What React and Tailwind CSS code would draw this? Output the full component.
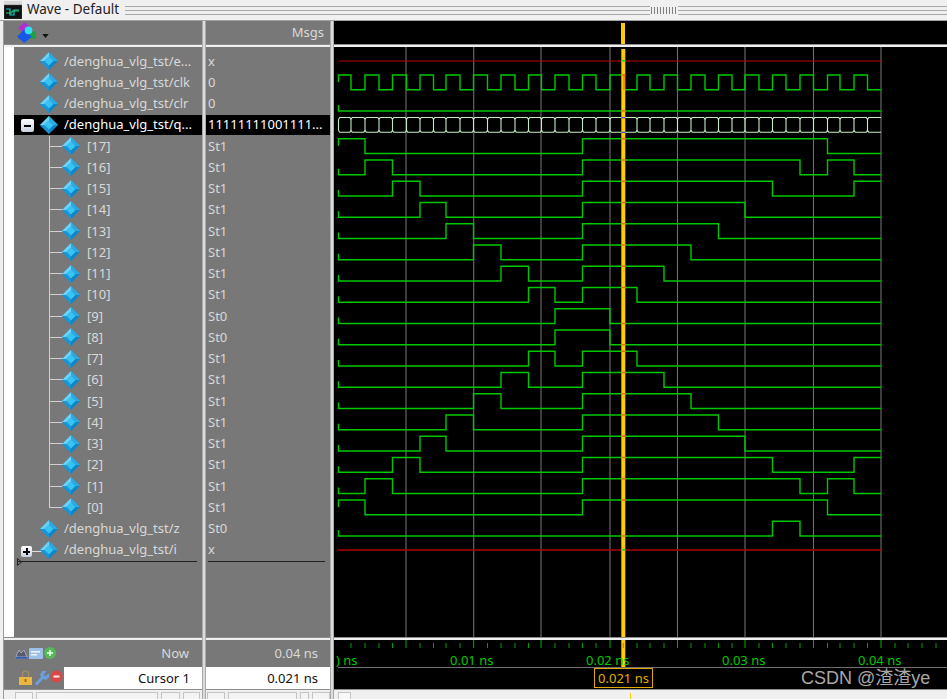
const E = [351,365,379,392.5,406.5,420,433.5,446,460,473.5,487.5,501,515,528.5,541.5,555,569,582.5,596,610,623,637,650,664,677.5,691,705,718.5,732,745,759,772.5,786,800,813.5,827.5,840,854,867.5];
const START = 338.5, END = 881, CX = 623.3;
const topOf = (k) => 75 + 21.25 * k;
const LOW = 14.7;

const NAMES = ['[17]','[16]','[15]','[14]','[13]','[12]','[11]','[10]','[9]','[8]','[7]','[6]','[5]','[4]','[3]','[2]','[1]','[0]'];
const VALS = ['St1','St1','St1','St1','St1','St1','St1','St1','St0','St0','St1','St1','St1','St1','St1','St1','St1','St1'];

// [row index, initial level, edge indexes]
const WAVES = [
  [0, 1, E.map((_, i) => i)],
  [1, 0, []],
  [3, 1, [1, 17, 35]],
  [4, 0, [1, 3, 17, 33, 35, 37]],
  [5, 0, [3, 5, 17, 31, 37]],
  [6, 0, [5, 7, 17, 29]],
  [7, 0, [7, 9, 17, 27]],
  [8, 0, [9, 11, 17, 25]],
  [9, 0, [11, 13, 17, 23]],
  [10, 0, [13, 15, 17, 21]],
  [11, 0, [15, 19]],
  [12, 0, [15, 19]],
  [13, 0, [13, 15, 17, 21]],
  [14, 0, [11, 13, 17, 23]],
  [15, 0, [9, 11, 17, 25]],
  [16, 0, [7, 9, 17, 27]],
  [17, 0, [5, 7, 17, 29]],
  [18, 0, [3, 5, 17, 31, 37]],
  [19, 0, [1, 3, 17, 33, 35, 37]],
  [20, 1, [1, 17, 35]],
  [21, 0, [31, 33]],
];

function wavePath([k, init, edges]) {
  const hi = topOf(k), lo = hi + LOW;
  let lvl = init;
  let y = lvl ? hi : lo;
  let d = `M${START} ${lvl ? hi + 7 : lo - 6} L${START} ${y}`;
  edges.forEach((i) => {
    lvl = 1 - lvl;
    const ny = lvl ? hi : lo;
    d += ` L${E[i]} ${y} L${E[i]} ${ny}`;
    y = ny;
  });
  return d + ` L${END} ${y}`;
}

function levelAtCursor([k, init, edges]) {
  const n = edges.filter((i) => E[i] <= CX - 1).length;
  return (init + n) % 2 ? topOf(k) : topOf(k) + LOW;
}

function busPath() {
  const t = topOf(2), b = t + LOW;
  const xs = [START, ...E];
  let d = '';
  xs.forEach((a, i) => {
    const c = xs[i + 1];
    // top and bottom rails with shoulders that close in on the edge
    const tail = (y, yIn) => (c === undefined ? `L${END} ${y}` : `L${c - 1.2} ${y} L${c} ${yIn}`);
    d += `M${a} ${t + 2} L${a + 1.2} ${t} ${tail(t, t + 2)} `;
    d += `M${a} ${b - 2} L${a + 1.2} ${b} ${tail(b, b - 2)} `;
    d += `M${a} ${t + 2} L${a} ${b - 2} `;
  });
  return d;
}

const GRID = [406, 473.7, 541, 610, 677.5, 745, 813.5, 881];

function Diamond() {
  return (
    <svg viewBox="0 0 18 18" className="w-[18px] h-[18px] shrink-0">
      <path d="M9 0 L18 9 L9 18 L0 9 Z" fill="#0c86c8" />
      <path d="M9 0 L0 9 L4.5 9 L9 4.5 Z" fill="#6fd2f5" />
      <path d="M9 0 L18 9 L13.5 9 L9 4.5 Z" fill="#2fa9e2" />
      <path d="M0 9 L9 18 L9 13.5 L4.5 9 Z" fill="#1a95d6" />
      <path d="M9 4.5 L13.5 9 L9 13.5 L4.5 9 Z" fill="#35c4f4" />
    </svg>
  );
}

function NameRow({ name, child, selected }) {
  return (
    <div className={`relative h-[21.25px] flex items-center ${child ? 'pl-[58px]' : selected ? 'pl-[26px] ml-[10px] bg-black text-white border-y border-[#787878]' : 'pl-[36px]'}`}>
      <Diamond />
      <span className={`whitespace-nowrap ${child ? 'ml-[7px]' : 'ml-[6px]'}`}>{name}</span>
    </div>
  );
}

function TreeBox({ minus, className }) {
  return (
    <span className={`absolute flex items-center justify-center rounded-[2px] bg-gradient-to-b from-white to-[#c8d0e0] ${className}`}>
      <span className="block bg-black w-[7px] h-[2px]" />
      {!minus && <span className="absolute block bg-black w-[2px] h-[7px]" />}
    </span>
  );
}

const Sep = () => <div className="w-[4px] shrink-0 bg-[#dcdcdc] border-x border-[#a8a8a8] self-stretch" />;
const HDiv = () => <div className="h-[3px] shrink-0 bg-[#f0f0f0] border-t border-[#8c8c8c]" />;

const TICKS = [351,365,379,392.5,406,420,433.5,446,460,473.7,487.5,501,515,528.5,541,555,569,582.5,596,610,637,650,664,677.5,691,705,718.5,732,745,759,772.5,786,800,813.5,827.5,840,854,867.5,881,895,908,922,936];

export default function App() {
  return (
    <div
      className="w-[947px] h-[699px] overflow-hidden bg-[#f0f0f0] flex flex-col text-[13px] leading-none"
      style={{ fontFamily: '"Noto Sans", "Noto Sans CJK SC", sans-serif' }}
    >
      {/* Title bar */}
      <div className="h-[21px] shrink-0 flex items-center pl-[4px] border-b border-[#a0a0a0]">
        <svg viewBox="0 0 18 18" className="w-[18px] h-[18px] shrink-0">
          <rect width="18" height="4" fill="#d8d8d8" />
          <rect y="4" width="18" height="14" fill="#111" stroke="#555" strokeWidth="0.5" />
          <path d="M2 8 H6 V14 H10 V9 H15" stroke="#1cc" strokeWidth="1.2" fill="none" />
          <path d="M2 12 H8 V10 H15" stroke="#3c6" strokeWidth="1" fill="none" />
        </svg>
        <span className="ml-[5px] text-[#222] whitespace-nowrap text-[13.5px] w-[98px]">Wave - Default</span>
        <div className="w-[525px] h-[9px] border-y border-[#a8a8a8] flex items-center">
          <div className="w-full h-px bg-[#a8a8a8]" />
        </div>
        <div className="w-[26px] h-[7px] mx-[1px] bg-[repeating-linear-gradient(90deg,#808080_0_1px,#f0f0f0_1px_3px)]" />
        <div className="flex-1 h-[9px] border-y border-[#a8a8a8] flex items-center">
          <div className="w-full h-px bg-[#a8a8a8]" />
        </div>
      </div>

      {/* Body */}
      <div className="flex-1 flex min-h-0 pl-[3px] bg-[#f0f0f0]">
        <div className="w-px shrink-0 bg-[#9a9a9a]" />

        {/* Name column */}
        <div className="w-[198px] shrink-0 flex flex-col text-[#d8d8d8]">
          <div className="h-[23px] shrink-0 bg-[#787878] flex items-center pl-[13px]">
            <svg viewBox="0 0 20 20" className="w-[21px] h-[21px]">
              <path d="M7 0 L14 6 L7 11 L1 6 Z" fill="#b030d0" />
              <rect x="10" y="9" width="8" height="7" fill="#20a040" />
              <path d="M7 7 L14 14 L7 20 L0 14 Z" fill="#1858e8" />
              <circle cx="11" cy="8" r="3.6" fill="#30e0f0" />
            </svg>
            <svg viewBox="0 0 8 5" className="w-[7px] h-[4px] ml-[4px] mt-[6px]"><path d="M0 0 H8 L4 5 Z" fill="#111" /></svg>
          </div>
          <HDiv />
          <div className="relative h-[590px] shrink-0 bg-[#787878] pt-[3.5px]">
            <div className="absolute left-0 top-0 bottom-0 w-[10px] bg-white" />
            <div className="absolute left-[45px] top-[87px] w-px h-[374px] bg-[#d0d0d0]" />
            {NAMES.map((n, i) => (
              <div key={n} className="absolute left-[46px] w-[13px] h-px bg-[#d0d0d0]" style={{ top: 98.5 + 21.25 * i }} />
            ))}
            <div className="absolute left-[30px] top-[78px] w-[8px] h-px bg-[#e0e0e0]" />
            <div className="absolute left-[28px] top-[504px] w-[10px] h-px bg-[#e0e0e0]" />

            {['/denghua_vlg_tst/e...', '/denghua_vlg_tst/clk', '/denghua_vlg_tst/clr'].map((n) => (
              <NameRow key={n} name={n} />
            ))}
            <NameRow name="/denghua_vlg_tst/q..." selected />
            {NAMES.map((n) => <NameRow key={n} name={n} child />)}
            <NameRow name="/denghua_vlg_tst/z" />
            <NameRow name="/denghua_vlg_tst/i" />

            <TreeBox minus className="left-[17px] top-[72px] w-[13px] h-[13px]" />
            <TreeBox className="left-[17px] top-[499px] w-[11px] h-[11px]" />
            <div className="absolute left-[14px] top-[514px] w-[179px] h-px bg-[#222]" />
            <svg viewBox="0 0 5 8" className="absolute left-[13px] top-[511px] w-[5px] h-[8px]"><path d="M0.5 0.5 L4.5 4 L0.5 7.5 Z" fill="none" stroke="#222" /></svg>
          </div>
          <HDiv />
          <div className="h-[27px] shrink-0 bg-[#787878] flex items-center justify-end pr-[13px] relative">
            <svg viewBox="0 0 46 14" className="absolute left-[11px] top-[6px] w-[46px] h-[14px]">
              <path d="M1 11 H12 L9 4 L6 7 L4 4 L2 8 Z" fill="#5a5a6a" stroke="#a8b8d0" strokeWidth="0.8" />
              <rect x="1" y="11" width="11" height="1.6" fill="#3060c0" />
              <rect x="14" y="2" width="14" height="11" rx="1" fill="#9cc0e8" />
              <rect x="16" y="5" width="9" height="1.5" fill="#f0f4fa" />
              <rect x="16" y="8" width="6" height="1.5" fill="#f0f4fa" />
              <circle cx="35" cy="7" r="6" fill="#58b858" />
              <path d="M32 7 H38 M35 4 V10" stroke="#eaffea" strokeWidth="1.5" />
            </svg>
            <span>Now</span>
          </div>
          <div className="h-[22px] shrink-0 bg-[#787878] flex items-center relative">
            <svg viewBox="0 0 46 16" className="absolute left-[15px] top-[3px] w-[46px] h-[16px]">
              <path d="M3.5 7 V4 a3 3 0 0 1 6 0 V7" fill="none" stroke="#a89060" strokeWidth="1.2" />
              <rect x="0" y="7" width="13" height="8" fill="#e8b840" />
              <rect x="5.5" y="9" width="2" height="3" fill="#a87010" />
              <path d="M16 13.5 L22 7 A4 4 0 0 1 27.5 1.5 L24.5 4.5 L26.5 6.5 L29.5 3.5 A4 4 0 0 1 24 9 L18 15.5 Z" fill="#6aa0e0" />
              <circle cx="37.5" cy="6.5" r="6" fill="#d84848" />
              <rect x="34.5" y="5.5" width="6" height="2" fill="#ffe8e8" />
            </svg>
            <div className="ml-[60px] flex-1 self-stretch bg-white text-[#111] flex items-center justify-end pr-[12px]">Cursor 1</div>
          </div>
          <HDiv />
          <div className="h-[7px] shrink-0 pl-[11px] flex gap-[3px]">
            {[18, 122, 19, 17].map((w, i) => (
              <span key={i} style={{ width: w }} className="block bg-[#f4f4f4] border-t border-x border-[#c4c4c4]" />
            ))}
          </div>
        </div>

        <Sep />

        {/* Value column */}
        <div className="w-[124px] shrink-0 flex flex-col text-[#d8d8d8]">
          <div className="h-[23px] shrink-0 bg-[#787878] flex items-center justify-end pr-[6px]">Msgs</div>
          <HDiv />
          <div className="relative h-[590px] shrink-0 bg-[#787878] pt-[3.5px]">
            {['x', '0', '0', '11111111001111...', ...VALS, 'St0', 'x'].map((v, i) => (
              <div key={i} className={`h-[21.25px] flex items-center pl-[2px] whitespace-nowrap ${i === 3 ? 'bg-black text-white border-y border-[#787878]' : ''}`}>{v}</div>
            ))}
            <div className="absolute left-[2px] right-[5px] top-[514px] h-px bg-[#222]" />
          </div>
          <HDiv />
          <div className="h-[27px] shrink-0 bg-[#787878] flex items-center justify-end pr-[12px]">0.04 ns</div>
          <div className="h-[22px] shrink-0 bg-white text-[#111] flex items-center justify-end pr-[12px]">0.021 ns</div>
          <HDiv />
          <div className="h-[7px] shrink-0 pl-[1px] flex gap-[3px]">
            {[18, 70, 9, 18].map((w, i) => (
              <span key={i} style={{ width: w }} className="block bg-[#f4f4f4] border-t border-x border-[#c4c4c4]" />
            ))}
          </div>
        </div>

        <Sep />

        {/* Wave column */}
        <div className="relative flex-1 flex flex-col min-w-0 bg-black">
          <div className="relative h-[23px] shrink-0 bg-black">
            <span className="absolute left-[287.3px] top-[2px] bottom-0 w-[4px] bg-[#ffcc00]" />
          </div>
          <HDiv />
          <svg viewBox="334 47 613 590" className="w-[613px] h-[590px] shrink-0 block">
            {GRID.map((x) => (
              <line key={x} x1={x} x2={x} y1="47" y2="637" stroke="#6e6e6e" strokeWidth="1.1" />
            ))}
            <line x1={START} x2={END} y1="61" y2="61" stroke="#b80000" strokeWidth="1.2" />
            <line x1={START - 1} x2={END} y1="550" y2="550" stroke="#b00000" strokeWidth="1.6" />
            {WAVES.map((w) => (
              <path key={w[0]} d={wavePath(w)} fill="none" stroke="#00c800" strokeWidth="1.4" />
            ))}
            <path d={busPath()} fill="none" stroke="#c4ecc4" strokeWidth="1.1" />
            <rect x={CX - 2} y="49" width="4" height="588" fill="#ffcc00" />
            <rect x={CX - 2} y="60" width="4" height="1.5" fill="#30c030" />
            <rect x={CX - 2} y="549" width="4" height="1.5" fill="#30c030" />
            <rect x={CX - 2} y="117" width="4" height="1.3" fill="#4050d0" />
            <rect x={CX - 2} y="131.7" width="4" height="1.3" fill="#4050d0" />
            {WAVES.map((w) => (
              <rect key={w[0]} x={CX - 2} y={levelAtCursor(w) - 0.7} width="4" height="1.4" fill="#ff5a00" />
            ))}
            <line x1={CX + 0.7} x2={CX + 0.7} y1="75" y2="90" stroke="#ff4a00" strokeWidth="1" />
          </svg>
          <HDiv />
          <div className="relative h-[49px] shrink-0 bg-black">
            <svg viewBox="334 640 613 27" className="absolute left-0 top-0 w-[613px] h-[27px]">
              {TICKS.map((x) => {
                const major = GRID.includes(x);
                return <line key={x} x1={x} x2={x} y1={major ? 640 : 643} y2="648" stroke={major ? '#00b000' : '#00a000'} strokeWidth="1" />;
              })}
              <rect x={CX - 2} y="640" width="4" height="27" fill="#ffcc00" />
              <line x1={CX} x2={CX} y1="643" y2="648" stroke="#ff5a00" />
            </svg>
            <div className="absolute left-[4px] right-0 top-[27px] h-px bg-[#707070]" />
            {[
              [') ns', 2],
              ['0.01 ns', 116],
              ['0.02 ns', 252],
              ['0.03 ns', 388],
              ['0.04 ns', 524],
            ].map(([t, l]) => (
              <span key={t} className="absolute top-[14px] text-[#00c800] whitespace-nowrap" style={{ left: l }}>{t}</span>
            ))}
            <div className="absolute left-[260px] top-[28px] w-[59px] h-[20px] border border-[#e0a800] text-[#e0b000] flex items-center justify-center whitespace-nowrap">0.021 ns</div>
            <span
              className="absolute left-[467px] top-[28px] text-[18px] leading-[20px] text-[#a8a8a8] whitespace-nowrap"
              style={{ fontFamily: '"Liberation Sans", "Noto Sans CJK SC", sans-serif' }}
            >CSDN @渣渣ye</span>
          </div>
          <HDiv />
          <div className="relative h-[7px] shrink-0 bg-[#f0f0f0] pl-[4px]">
            <span className="block w-[13px] h-full bg-[#f8f8f8] border-t border-x border-[#c4c4c4]" />
            <span className="absolute left-[296px] top-[1px] w-px h-[6px] bg-[#ffcc00]" />
          </div>
        </div>
      </div>
    </div>
  );
}
